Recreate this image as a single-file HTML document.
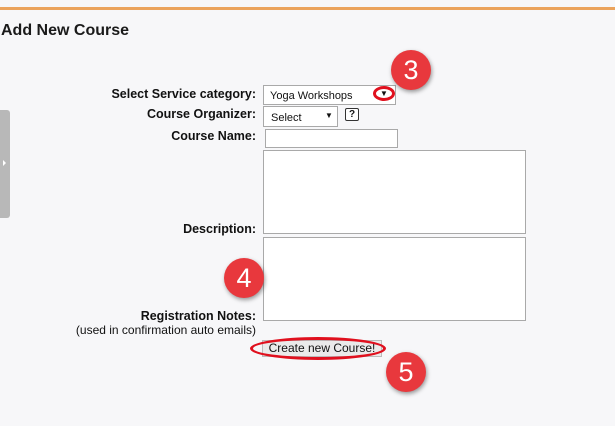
<html><head><style>
body{margin:0;width:615px;height:426px;background:#f7f7f9;font-family:"Liberation Sans",sans-serif;position:relative;overflow:hidden;color:#111}
.a{position:absolute}
.lbl{position:absolute;right:359px;font-weight:bold;font-size:12.5px;white-space:nowrap}
.box{position:absolute;background:#fff;border:1px solid #a9a9a9;box-sizing:border-box}
.c{position:absolute;width:40px;height:40px;border-radius:50%;background:#e8383d;color:#fff;font-size:27px;text-align:center;line-height:40px;box-shadow:1px 2px 4px rgba(0,0,0,.4)}
</style></head><body>
<div class="a" style="left:0;top:7px;width:615px;height:3px;background:#eba35c"></div>
<div class="a" style="left:1px;top:22px;font-size:16px;font-weight:bold;color:#1a1a1a">Add New Course</div>
<div class="a" style="left:0;top:110px;width:10px;height:108px;background:#b8b8b8;border-radius:0 3px 3px 0"></div>
<div class="a" style="left:3px;top:160px;width:0;height:0;border-left:3px solid #fff;border-top:3px solid transparent;border-bottom:3px solid transparent"></div>
<div class="lbl" style="top:87px">Select Service category:</div>
<div class="lbl" style="top:107px">Course Organizer:</div>
<div class="lbl" style="top:129px">Course Name:</div>
<div class="lbl" style="top:222px">Description:</div>
<div class="lbl" style="top:309px">Registration Notes:</div>
<div class="a" style="right:359px;top:323px;font-size:12px;white-space:nowrap">(used in confirmation auto emails)</div>
<div class="box" style="left:263px;top:85px;width:133px;height:20px;font-size:11px;padding:4px 0 0 6px">Yoga Workshops</div>
<div class="a" style="left:373px;top:86px;width:22px;height:15px;border:3px solid #e0101e;border-radius:50%;box-sizing:border-box;font-size:8px;text-align:center;line-height:9px">▼</div>
<div class="box" style="left:263px;top:106px;width:75px;height:21px;font-size:11px;padding:5px 0 0 7px">Select<span style="position:absolute;left:61px;top:4px;font-size:8px">▼</span></div>
<div class="a" style="left:345px;top:108px;width:12px;height:11px;border:1px solid #333;border-radius:2px;font-size:10px;font-weight:bold;text-align:center;line-height:11px;background:#fff">?</div>
<div class="box" style="left:265px;top:129px;width:133px;height:19px"></div>
<div class="box" style="left:263px;top:150px;width:263px;height:84px"></div>
<div class="box" style="left:263px;top:237px;width:263px;height:84px"></div>
<div class="a" style="left:262px;top:340px;width:120px;height:17px;background:#eaeaea;border:1px solid #bbb;box-sizing:border-box;font-size:12px;text-align:center;line-height:15px">Create new Course!</div>
<div class="a" style="left:250px;top:337px;width:136px;height:23px;border:3px solid #e0101e;border-radius:50%;box-sizing:border-box"></div>
<div class="c" style="left:391px;top:50px">3</div>
<div class="c" style="left:224px;top:258px">4</div>
<div class="c" style="left:386px;top:352px">5</div>
</body></html>
